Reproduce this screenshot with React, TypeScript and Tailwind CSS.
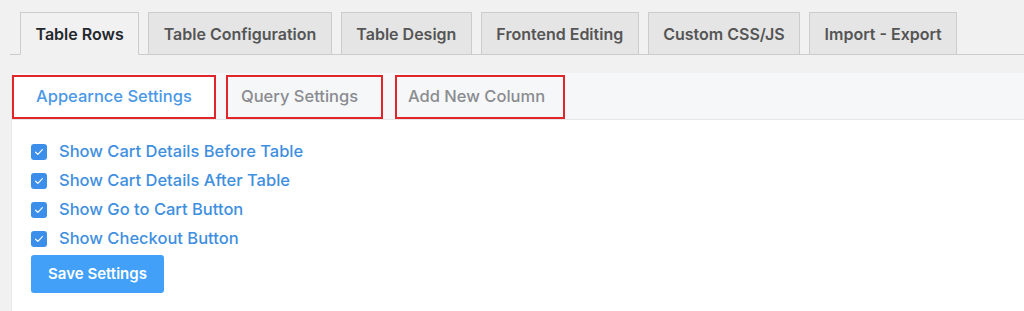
import { useState } from "react";

const TOP_TABS = ["Table Rows", "Table Configuration", "Table Design", "Frontend Editing", "Custom CSS/JS", "Import - Export"];

// sub tabs carry the red annotation boxes from the screenshot
const SUB_TABS = [
  { label: "Appearnce Settings", cls: "w-[204px] pl-[22px]" },
  { label: "Query Settings", cls: "w-[157px] pl-[13px] ml-[10px]" },
  { label: "Add New Column", cls: "w-[170px] pl-[11px] ml-[12px]" },
];

const OPTIONS = ["Show Cart Details Before Table", "Show Cart Details After Table", "Show Go to Cart Button", "Show Checkout Button"];

function Check({ on }: { on: boolean }) {
  return (
    <span className={on ? "flex h-4 w-4 items-center justify-center rounded-[3px] bg-[#3b8eea]" : "h-4 w-4 rounded-[3px] border border-[#bbb] bg-white"}>
      {on && (
        <svg viewBox="0 0 16 16" className="h-3 w-3" fill="none" stroke="white" strokeWidth="1.6" strokeLinecap="round" strokeLinejoin="round">
          <path d="M3.5 8.3l3 2.8 6-6.2" />
        </svg>
      )}
    </span>
  );
}

export default function App() {
  const [tab, setTab] = useState(0);
  const [sub, setSub] = useState(0);
  const [opts, setOpts] = useState([true, true, true, true]);

  return (
    <div className="h-[311px] overflow-hidden bg-[#f1f1f1] pl-[10px] pt-[12px]" style={{ fontFamily: "Inter, 'Liberation Sans', Arial, sans-serif" }}>
      <div className="flex gap-[9px] border-b border-[#ccc] pl-[10px]">
        {TOP_TABS.map((t, i) => (
          <button
            key={t}
            onClick={() => setTab(i)}
            className={
              "-mb-px h-[43px] border border-[#ccc] px-[14.5px] text-[16px] font-semibold " +
              (tab === i ? "border-b-[#f1f1f1] bg-[#f1f1f1] text-[#23282d]" : "bg-[#e5e5e5] text-[#555]")
            }
          >
            {t}
          </button>
        ))}
      </div>

      <div className="mt-[18px] ml-px h-full border-l border-[#e8e8e8] bg-white">
        <div className="flex h-[47px] items-center border-b border-[#e6e6e6] bg-[#f6f7f9] pt-px">
          {SUB_TABS.map((s, i) => (
            <button
              key={s.label}
              onClick={() => setSub(i)}
              className={
                "h-[44px] border-2 border-[#e0262a] text-left text-[16.5px] font-medium " +
                s.cls +
                (sub === i ? " bg-white text-[#4a98e6]" : " text-[#8a8c90]")
              }
            >
              {s.label}
            </button>
          ))}
        </div>

        <div className="pl-[19px] pt-[17px]">
          {OPTIONS.map((o, i) => (
            <label key={o} className="flex h-[29px] cursor-pointer items-center gap-[12px]" onClick={() => setOpts(opts.map((v, j) => (j === i ? !v : v)))}>
              <Check on={opts[i]} />
              <span className="text-[16.5px] font-medium text-[#3f8fdf]">{o}</span>
            </label>
          ))}
          <button className="mt-[2px] h-[38px] w-[133px] rounded-[3px] bg-[#42a0f9] text-[15px] font-semibold text-white">Save Settings</button>
        </div>
      </div>
    </div>
  );
}
